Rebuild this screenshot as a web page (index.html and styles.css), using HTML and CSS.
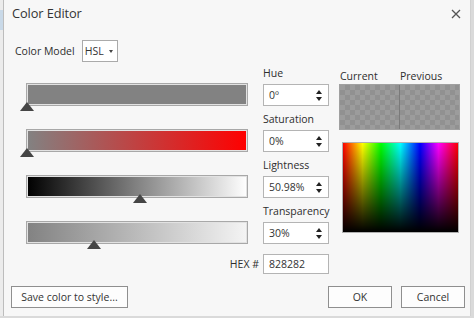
FILE: index.html
```html
<!DOCTYPE html>
<html>
<head>
<meta charset="utf-8">
<link rel="stylesheet" href="styles.css">
</head>
<body>
<div class="screen">
  <div class="backdrop"><div class="bd-blue"></div></div>
  <div class="dialog">
    <div class="titlebar">
      <span class="title">Color Editor</span>
      <svg class="close" width="10" height="10" viewBox="0 0 10 10"><path d="M1 1L9 9M9 1L1 9" stroke="#555" stroke-width="1.3" fill="none"/></svg>
    </div>
    <div class="model-row">
      <span class="lbl">Color Model</span>
      <div class="select"><span>HSL</span><span class="caret"></span></div>
    </div>
    <div class="main">
      <div class="sliders">
        <div class="slider"><div class="bar bar-hue"></div><span class="thumb" style="left:0%"></span></div>
        <div class="slider"><div class="bar bar-sat"></div><span class="thumb" style="left:0%"></span></div>
        <div class="slider"><div class="bar bar-light"></div><span class="thumb" style="left:50.98%"></span></div>
        <div class="slider"><div class="bar bar-trans"></div><span class="thumb" style="left:30%"></span></div>
      </div>
      <div class="fields">
        <div class="field"><div class="lbl">Hue</div><div class="spin"><span>0º</span><span class="arrows"><i class="up"></i><i class="down"></i></span></div></div>
        <div class="field"><div class="lbl">Saturation</div><div class="spin"><span>0%</span><span class="arrows"><i class="up"></i><i class="down"></i></span></div></div>
        <div class="field"><div class="lbl">Lightness</div><div class="spin"><span>50.98%</span><span class="arrows"><i class="up"></i><i class="down"></i></span></div></div>
        <div class="field"><div class="lbl">Transparency</div><div class="spin"><span>30%</span><span class="arrows"><i class="up"></i><i class="down"></i></span></div></div>
      </div>
      <div class="hex-row"><span class="lbl">HEX #</span><div class="hex">828282</div></div>
      <div class="preview">
        <div class="pv-labels"><span class="lbl">Current</span><span class="lbl">Previous</span></div>
        <div class="swatches"><div class="sw"></div><div class="sw"></div></div>
        <div class="spectrum"></div>
      </div>
    </div>
    <div class="footer">
      <div class="btn btn-save">Save color to style...</div>
      <div class="right-btns">
        <div class="btn">OK</div>
        <div class="btn">Cancel</div>
      </div>
    </div>
  </div>
</div>
</body>
</html>
```
FILE: styles.css
```css
* { box-sizing: border-box; }
html, body { margin: 0; padding: 0; }
body {
  width: 474px; height: 318px; overflow: hidden;
  background: #dadada;
  font-family: "Open Sans", "Noto Sans", sans-serif;
  color: #333;
}
.screen { display: flex; height: 316px; }
.backdrop { width: 3px; background: #ececec; padding-top: 10px; }
.bd-blue { height: 20px; background: #c9d9e8; }
.dialog {
  width: 468px; height: 316px;
  background: #f7f7f7;
  border-left: 1px solid #bdbdbd;
  border-right: 1px solid #d0d0d0;
  display: flex; flex-direction: column;
}
.titlebar {
  height: 28px; display: flex; align-items: center; justify-content: space-between;
  padding: 0 9px 2px 8px;
}
.title { font-size: 12.8px; color: #333; letter-spacing: -0.1px; }
.close { margin-top: 1px; }
.lbl { font-size: 10.5px; line-height: 16px; color: #2e2e2e; white-space: nowrap; }
.model-row {
  display: flex; align-items: center; gap: 7px;
  padding-left: 11px; height: 22px; margin-top: 12px;
}
.select {
  width: 36px; height: 22px; background: #fff; border: 1px solid #aaa;
  display: flex; align-items: center; padding-left: 2px; gap: 5px;
  font-size: 10.5px;
}
.caret { width: 0; height: 0; border-left: 2.5px solid transparent; border-right: 2.5px solid transparent; border-top: 3px solid #444; }
.main {
  display: grid;
  grid-template-columns: 222px 81px 131px;
  grid-template-rows: 184px 25px;
  padding-left: 22px;
  margin-top: 3px;
}
.sliders { grid-column: 1; grid-row: 1; display: flex; flex-direction: column; }
.slider { height: 46px; padding-top: 18px; position: relative; }
.bar {
  height: 23px; border: 1px solid #a8a8a8; box-shadow: inset 0 0 0 1px #e2e2e2;
}
.bar-hue { background: #828282; }
.bar-sat { background: linear-gradient(to right, #828282, #ff0000); }
.bar-light { background: linear-gradient(to right, #000, #828282, #fff); }
.bar-trans { background: linear-gradient(to right, #828282, #f4f4f4); }
.thumb {
  position: absolute; top: 37px; margin-left: -6px;
  width: 0; height: 0;
  border-left: 7px solid transparent; border-right: 7px solid transparent;
  border-bottom: 9px solid #454545;
}
.fields { grid-column: 2; grid-row: 1; padding-left: 15px; display: flex; flex-direction: column; }
.field { height: 46px; display: flex; flex-direction: column; gap: 3px; }
.spin {
  width: 66px; height: 22px; background: #fff; border: 1px solid #b4b4b4;
  display: flex; align-items: center; justify-content: space-between;
  padding: 0 6px 0 5px; font-size: 10.5px; color: #333;
}
.arrows { display: flex; flex-direction: column; gap: 3px; }
.arrows i { display: block; width: 0; height: 0; border-left: 3.5px solid transparent; border-right: 3.5px solid transparent; }
.arrows .up { border-bottom: 4px solid #222; }
.arrows .down { border-top: 4px solid #222; }
.hex-row {
  grid-column: 1 / 3; grid-row: 2; display: flex; justify-content: flex-end; align-items: center;
  gap: 4px; padding-top: 5px;
}
.hex {
  width: 66px; height: 20px; background: #fff; border: 1px solid #b4b4b4;
  font-size: 10.5px; line-height: 18px; padding-left: 5px;
}
.preview { grid-column: 3; grid-row: 1 / 3; padding-left: 10px; padding-top: 3px; }
.pv-labels { display: flex; height: 16px; }
.pv-labels .lbl { width: 60px; padding-left: 1px; }
.swatches {
  width: 121px; height: 46px; border: 1px solid #a0a0a0; display: flex;
}
.sw {
  flex: 1;
  background-color: #9c9c9c;
  background-image:
    linear-gradient(45deg, #919191 25%, transparent 25%, transparent 75%, #919191 75%),
    linear-gradient(45deg, #919191 25%, transparent 25%, transparent 75%, #919191 75%);
  background-size: 10px 10px;
  background-position: 0 0, 5px 5px;
}
.sw + .sw { border-left: 1px solid #7a7a7a; }
.spectrum {
  margin-top: 12px; margin-left: 3px; width: 117px; height: 91px;
  border: 1px solid #b0b0b0;
  background:
    linear-gradient(to bottom, rgba(0,0,0,0) 0%, rgba(0,0,0,0.35) 35%, #000 100%),
    linear-gradient(to right, #f00, #ff0 17%, #0f0 33%, #0ff 50%, #00f 67%, #f0f 83%, #f00);
}
.footer {
  display: flex; justify-content: space-between; align-items: center;
  padding: 12px 5px 0 7px;
}
.right-btns { display: flex; gap: 9px; }
.btn {
  height: 22px; min-width: 64px; background: #fdfdfd; border: 1px solid #8f8f8f;
  font-size: 10.5px; line-height: 20px; text-align: center; color: #333;
  padding: 0 8px; white-space: nowrap;
}
.btn-save { width: 117px; }
```
